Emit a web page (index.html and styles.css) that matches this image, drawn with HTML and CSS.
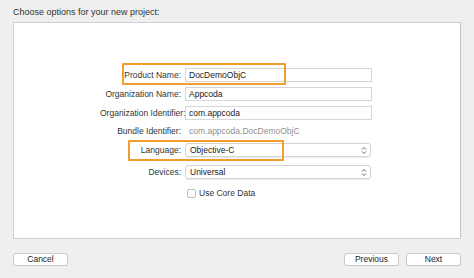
FILE: index.html
```html
<!DOCTYPE html>
<html lang="en">
<head>
  <meta charset="UTF-8">
  <title>New Project</title>
  <link rel="stylesheet" href="styles.css">
</head>
<body>
  <div class="sheet">
    <div class="title">Choose options for your new project:</div>

    <div class="panel">
      <div class="form">
        <div class="row">
          <div class="label">Product Name:</div>
          <div class="field">DocDemoObjC</div>
          <div class="mark mark-product"></div>
        </div>

        <div class="row">
          <div class="label">Organization Name:</div>
          <div class="field">Appcoda</div>
        </div>

        <div class="row">
          <div class="label">Organization Identifier:</div>
          <div class="field">com.appcoda</div>
        </div>

        <div class="row row-text">
          <div class="label">Bundle Identifier:</div>
          <div class="value">com.appcoda.DocDemoObjC</div>
        </div>

        <div class="row row-lang">
          <div class="label">Language:</div>
          <div class="popup">
            <span>Objective-C</span>
            <svg class="arrows" width="6" height="9" viewBox="0 0 6 9">
              <path d="M1 3.5 L3 1.5 L5 3.5 M1 5.5 L3 7.5 L5 5.5" fill="none" stroke="#555" stroke-width="0.9"/>
            </svg>
          </div>
          <div class="mark mark-lang"></div>
        </div>

        <div class="row row-devices">
          <div class="label">Devices:</div>
          <div class="popup">
            <span>Universal</span>
            <svg class="arrows" width="6" height="9" viewBox="0 0 6 9">
              <path d="M1 3.5 L3 1.5 L5 3.5 M1 5.5 L3 7.5 L5 5.5" fill="none" stroke="#555" stroke-width="0.9"/>
            </svg>
          </div>
        </div>

        <div class="row row-check">
          <div class="label"></div>
          <div class="check">
            <span class="box"></span>
            <span>Use Core Data</span>
          </div>
        </div>
      </div>
    </div>

    <div class="footer">
      <button class="btn">Cancel</button>
      <div class="spacer"></div>
      <button class="btn">Previous</button>
      <button class="btn">Next</button>
    </div>
  </div>
</body>
</html>
```

FILE: styles.css
```css
body {
  margin: 0;
  background-color: #efefef;
  font-family: "Liberation Sans", Arial, sans-serif;
  color: #2b2b2b;
}

.sheet {
  width: 448px;
  padding-left: 13px;
}

.title {
  height: 22px;
  font-size: 9px;
  line-height: 12px;
  padding-top: 6px;
  box-sizing: border-box;
  color: #333;
}

.panel {
  height: 217px;
  box-sizing: border-box;
  background: #ffffff;
  border: 1px solid #cfcfcf;
  border-right-color: #c4c4c4;
  padding-top: 45px;
}

.form {
  margin-left: 86px;
}

.row {
  position: relative;
  display: flex;
  align-items: center;
  height: 14px;
  margin-bottom: 5px;
  font-size: 8.5px;
}

.label {
  width: 81px;
  flex-shrink: 0;
  text-align: right;
  color: #333;
  margin-right: 4px;
  white-space: nowrap;
}

.field {
  width: 187px;
  height: 14px;
  box-sizing: border-box;
  border: 1px solid #d6d6d6;
  padding-left: 3px;
  line-height: 12px;
  color: #222;
}

.row-text {
  height: 13px;
  margin-top: -1px;
  margin-bottom: 6px;
}

.value {
  color: #909090;
  padding-left: 4px;
}

.row-lang {
  margin-bottom: 8px;
}

.popup {
  width: 186px;
  height: 14px;
  box-sizing: border-box;
  border: 1px solid #d4d4d4;
  border-radius: 3px;
  box-shadow: 0 1px 1px rgba(0,0,0,0.08);
  padding-left: 4px;
  padding-right: 3px;
  display: flex;
  align-items: center;
  justify-content: space-between;
  color: #222;
}

.row-devices {
  margin-bottom: 9px;
}

.row-check {
  height: 10px;
}

.check {
  display: flex;
  align-items: center;
  padding-left: 2px;
  color: #333;
}

.box {
  width: 7px;
  height: 7px;
  border: 1px solid #bdbdbd;
  border-radius: 2px;
  background: #fff;
  margin-right: 3px;
}

.mark {
  position: absolute;
  box-sizing: border-box;
  border: 2px solid #f39c2e;
  border-radius: 1px;
}

.mark-product {
  left: 22px;
  top: -5px;
  width: 164px;
  height: 22px;
}

.mark-lang {
  left: 28px;
  top: -3px;
  width: 156px;
  height: 21px;
}

.footer {
  display: flex;
  margin-top: 14px;
  gap: 7px;
}

.spacer {
  flex: 1;
}

.btn {
  width: 55px;
  height: 13px;
  padding: 0;
  background: #ffffff;
  border: 1px solid #c9c9c9;
  border-radius: 3px;
  box-shadow: 0 1px 0 rgba(0,0,0,0.06);
  font-family: "Liberation Sans", Arial, sans-serif;
  font-size: 8.5px;
  line-height: 11px;
  color: #222;
}
```
